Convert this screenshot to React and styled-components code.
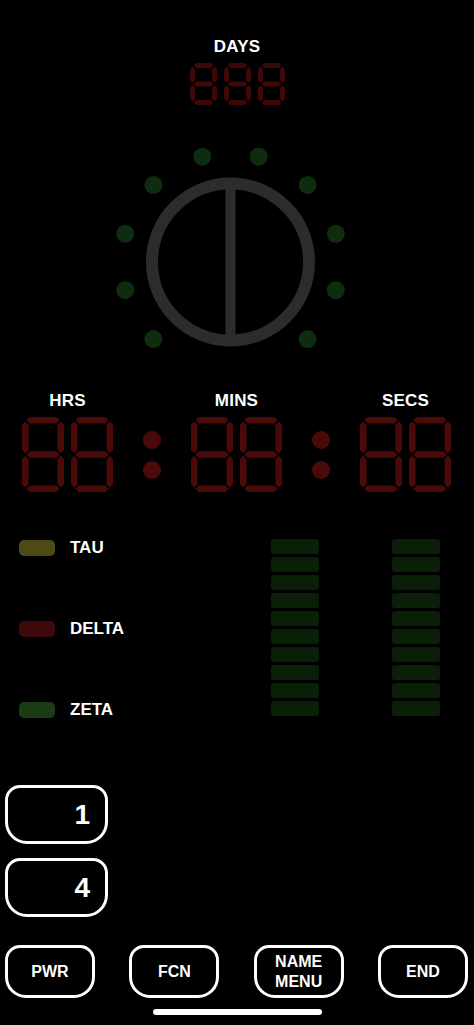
import React from "react";
import styled, { createGlobalStyle } from "styled-components";

const Global = createGlobalStyle`
  html, body { margin: 0; padding: 0; background: #000; }
  body { font-family: "Liberation Sans", Arial, sans-serif; }
`;

const Screen = styled.div`
  width: 474px;
  height: 1025px;
  background: #000;
  color: #fff;
  display: flex;
  flex-direction: column;
  overflow: hidden;
`;

const Label = styled.div`
  font-family: "Liberation Sans", Arial, sans-serif;
  font-weight: 700;
  font-size: ${(p) => p.$size || 16}px;
  line-height: 20px;
  color: #fff;
  text-align: center;
  letter-spacing: 0.2px;
`;

const DaysBlock = styled.div`
  margin-top: 37px;
  display: flex;
  flex-direction: column;
  align-items: center;
  gap: 6px;
`;

const DigitRow = styled.div`
  display: flex;
  gap: ${(p) => p.$gap}px;
`;

const KnobArea = styled.div`
  margin-top: 35px;
  height: 220px;
`;

const TimeGrid = styled.div`
  margin-top: 31px;
  padding-left: 22px;
  display: grid;
  grid-template-columns: 91px 78px 91px 78px 91px;
  grid-template-rows: 20px 75px;
  row-gap: 6px;
`;

const Colon = styled.div`
  grid-row: 2;
  display: flex;
  flex-direction: column;
  align-items: center;
  justify-content: center;
  gap: 12px;
`;

const ColonDot = styled.div`
  width: 18px;
  height: 18px;
  border-radius: 50%;
  background: #4a0a0a;
`;

const Meters = styled.div`
  margin-top: 46px;
  display: flex;
  align-items: flex-start;
`;

const Legend = styled.div`
  padding-left: 19px;
  width: 271px;
  box-sizing: border-box;
  display: flex;
  flex-direction: column;
  gap: 61px;
`;

const LegendItem = styled.div`
  display: flex;
  align-items: center;
  height: 20px;
  gap: 15px;
`;

const Swatch = styled.div`
  width: 36px;
  height: 16px;
  border-radius: 5px;
  background: ${(p) => p.$color};
`;

const LegendText = styled.span`
  font-weight: 700;
  font-size: 17px;
  color: #fff;
`;

const BarColumns = styled.div`
  margin-top: 1px;
  display: flex;
  gap: 73px;
`;

const BarColumn = styled.div`
  display: flex;
  flex-direction: column;
  gap: 3px;
`;

const Bar = styled.div`
  width: 48px;
  height: 15px;
  border-radius: 3px;
  background: #0a1f08;
`;

const NumberPad = styled.div`
  margin-top: 65px;
  padding-left: 5px;
  display: flex;
  flex-direction: column;
  gap: 14px;
`;

const NumberKey = styled.button`
  width: 103px;
  height: 59px;
  box-sizing: border-box;
  background: #000;
  border: 3px solid #fff;
  border-radius: 15px 15px 22px 22px;
  color: #fff;
  font-family: "Liberation Sans", Arial, sans-serif;
  font-weight: 700;
  font-size: 28px;
  text-align: right;
  padding: 0 15px 0 0;
  display: flex;
  align-items: center;
  justify-content: flex-end;
`;

const BottomBar = styled.div`
  margin-top: 28px;
  padding: 0 6px 0 5px;
  display: flex;
  justify-content: space-between;
`;

const SoftKey = styled.button`
  width: 90px;
  height: 53px;
  box-sizing: border-box;
  background: #000;
  border: 3px solid #fff;
  border-radius: 15px 15px 21px 21px;
  color: #fff;
  font-family: "Liberation Sans", Arial, sans-serif;
  font-weight: 700;
  font-size: 16px;
  line-height: 20px;
  padding: 0;
  display: flex;
  align-items: center;
  justify-content: center;
  text-align: center;
`;

const HomeIndicator = styled.div`
  margin: 11px auto 0;
  width: 169px;
  height: 6px;
  border-radius: 3px;
  background: #fff;
`;

function segPolys(w, h, t, g) {
  const ht = t / 2;
  const H = (y, x0, x1) =>
    `${x0},${y} ${x0 + ht},${y - ht} ${x1 - ht},${y - ht} ${x1},${y} ${x1 - ht},${y + ht} ${x0 + ht},${y + ht}`;
  const V = (x, y0, y1) =>
    `${x},${y0} ${x + ht},${y0 + ht} ${x + ht},${y1 - ht} ${x},${y1} ${x - ht},${y1 - ht} ${x - ht},${y0 + ht}`;
  const xl = ht, xr = w - ht, yt = ht, ym = h / 2, yb = h - ht;
  return [
    H(yt, xl + g, xr - g),
    H(ym, xl + g, xr - g),
    H(yb, xl + g, xr - g),
    V(xl, yt + g, ym - g),
    V(xr, yt + g, ym - g),
    V(xl, ym + g, yb - g),
    V(xr, ym + g, yb - g),
  ];
}

function Digit({ w, h, t, color }) {
  const polys = segPolys(w, h, t, 1.2);
  return (
    <svg width={w} height={h} viewBox={`0 0 ${w} ${h}`} role="img" aria-label="8">
      {polys.map((p, i) => (
        <polygon key={i} points={p} fill={color} />
      ))}
    </svg>
  );
}

function Digits({ count, w, h, t, gap, color }) {
  return (
    <DigitRow $gap={gap}>
      {Array.from({ length: count }).map((_, i) => (
        <Digit key={i} w={w} h={h} t={t} color={color} />
      ))}
    </DigitRow>
  );
}

function Knob() {
  const cx = 230.5, cy = 122, R = 109;
  const angles = [15, 45, 75, 105, 135, 165, 195, 225, -15, -45];
  return (
    <svg width="474" height="220" viewBox="0 0 474 220">
      {angles.map((a) => {
        const r = (a * Math.PI) / 180;
        return (
          <circle key={a} cx={cx + R * Math.cos(r)} cy={cy - R * Math.sin(r)} r="9" fill="#0e2d0e" />
        );
      })}
      <circle cx={cx} cy={cy} r="78.5" fill="none" stroke="#2c2c2c" strokeWidth="12" />
      <line x1={cx} y1={cy - 79} x2={cx} y2={cy + 79} stroke="#2c2c2c" strokeWidth="10" />
    </svg>
  );
}

const legend = [
  { name: "TAU", color: "#4d4a16" },
  { name: "DELTA", color: "#3f0909" },
  { name: "ZETA", color: "#1b3c15" },
];

export default function App() {
  const bars = Array.from({ length: 10 });
  return (
    <>
      <Global />
      <Screen>
        <DaysBlock>
          <Label $size={17}>DAYS</Label>
          <Digits count={3} w={27} h={42} t={5} gap={7} color="#3e0808" />
        </DaysBlock>
        <KnobArea>
          <Knob />
        </KnobArea>
        <TimeGrid>
          <Label $size={17} style={{ gridColumn: 1 }}>HRS</Label>
          <Label $size={17} style={{ gridColumn: 3 }}>MINS</Label>
          <Label $size={17} style={{ gridColumn: 5 }}>SECS</Label>
          <div style={{ gridColumn: 1, gridRow: 2 }}>
            <Digits count={2} w={42} h={75} t={6.5} gap={7} color="#4a0a0a" />
          </div>
          <Colon style={{ gridColumn: 2 }}>
            <ColonDot />
            <ColonDot />
          </Colon>
          <div style={{ gridColumn: 3, gridRow: 2 }}>
            <Digits count={2} w={42} h={75} t={6.5} gap={7} color="#4a0a0a" />
          </div>
          <Colon style={{ gridColumn: 4 }}>
            <ColonDot />
            <ColonDot />
          </Colon>
          <div style={{ gridColumn: 5, gridRow: 2 }}>
            <Digits count={2} w={42} h={75} t={6.5} gap={7} color="#4a0a0a" />
          </div>
        </TimeGrid>
        <Meters>
          <Legend>
            {legend.map((l) => (
              <LegendItem key={l.name}>
                <Swatch $color={l.color} />
                <LegendText>{l.name}</LegendText>
              </LegendItem>
            ))}
          </Legend>
          <BarColumns>
            <BarColumn>{bars.map((_, i) => <Bar key={i} />)}</BarColumn>
            <BarColumn>{bars.map((_, i) => <Bar key={i} />)}</BarColumn>
          </BarColumns>
        </Meters>
        <NumberPad>
          <NumberKey>1</NumberKey>
          <NumberKey>4</NumberKey>
        </NumberPad>
        <BottomBar>
          <SoftKey>PWR</SoftKey>
          <SoftKey>FCN</SoftKey>
          <SoftKey>NAME<br />MENU</SoftKey>
          <SoftKey>END</SoftKey>
        </BottomBar>
        <HomeIndicator />
      </Screen>
    </>
  );
}
